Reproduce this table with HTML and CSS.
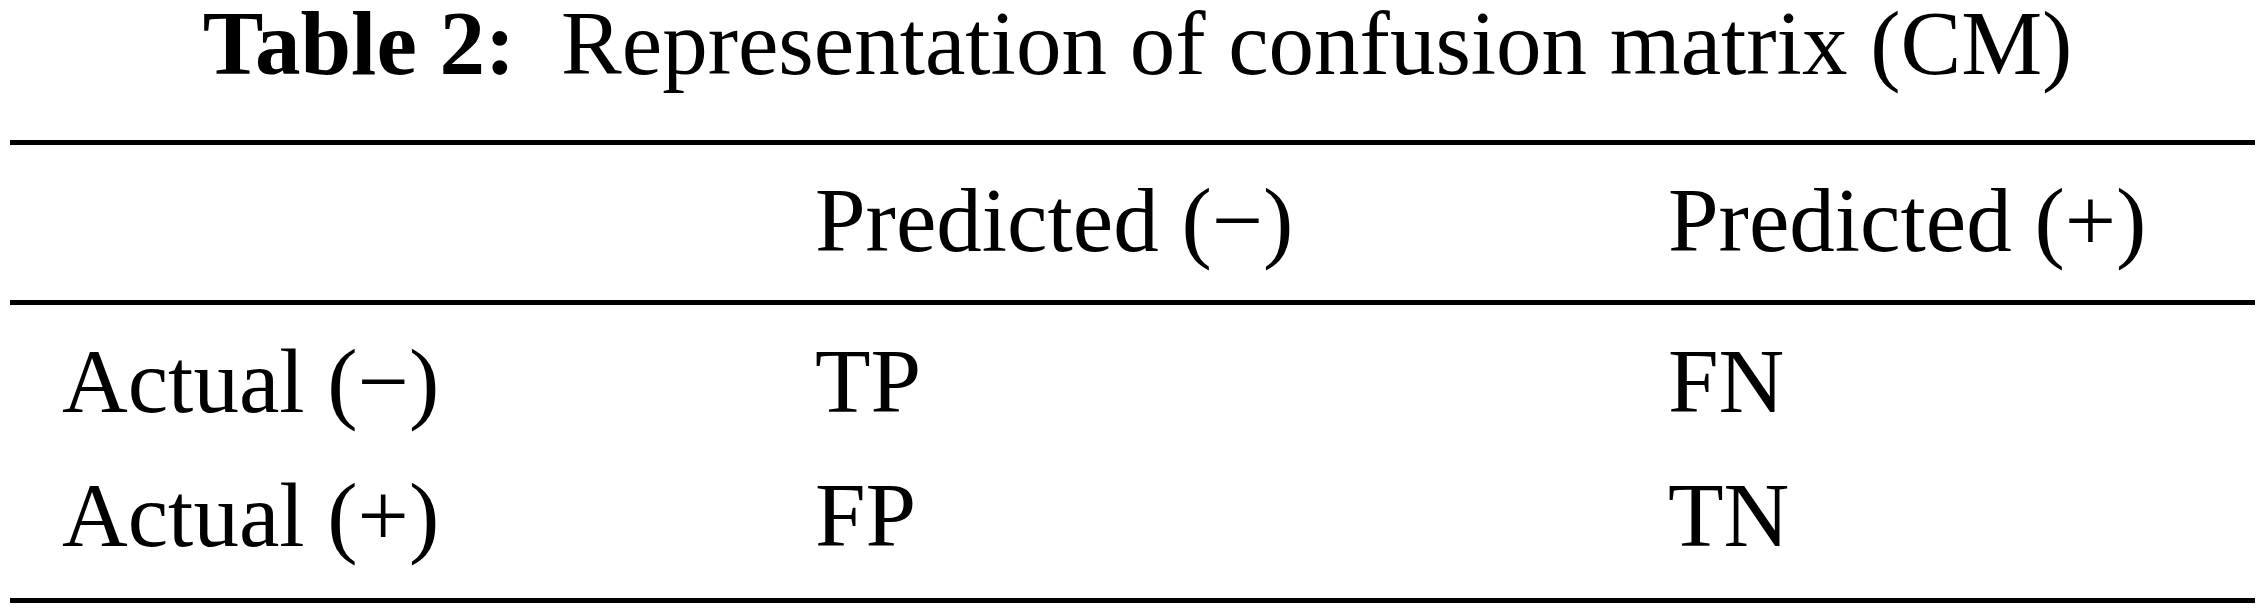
FILE: index.html
```html
<!DOCTYPE html>
<html lang="en">
<head>
<meta charset="utf-8">
<title>Table 2: Representation of confusion matrix (CM)</title>
<link rel="stylesheet" href="styles.css">
</head>
<body>
<div class="page">
  <div class="caption"><span class="label">Table 2:</span> Representation of confusion matrix (CM)</div>
  <div class="matrix">
    <div class="row head">
      <div class="cell"></div>
      <div class="cell">Predicted (−)</div>
      <div class="cell">Predicted (+)</div>
    </div>
    <div class="body">
      <div class="row">
        <div class="cell">Actual (−)</div>
        <div class="cell">TP</div>
        <div class="cell">FN</div>
      </div>
      <div class="row">
        <div class="cell">Actual (+)</div>
        <div class="cell">FP</div>
        <div class="cell">TN</div>
      </div>
    </div>
  </div>
</div>
</body>
</html>
```
FILE: styles.css
```css
html, body {
  margin: 0;
  padding: 0;
  background: #ffffff;
}

body {
  font-family: "Liberation Serif", "Times New Roman", serif;
  font-size: 91px;
  line-height: 88px;
  color: #000000;
}

.page {
  padding: 0 10px;
}

.caption {
  text-align: center;
  padding-left: 10px;
  margin-bottom: 52px;
  white-space: nowrap;
}

.label {
  font-weight: bold;
  margin-right: 23px;
}

.matrix {
  border-top: 5px solid #000000;
  border-bottom: 5px solid #000000;
}

.row {
  display: grid;
  grid-template-columns: 753px 853px 1fr;
  padding-left: 52px;
}

.head {
  padding-top: 32px;
  padding-bottom: 35px;
  border-bottom: 5px solid #000000;
}

.body {
  display: grid;
  row-gap: 46px;
  padding-top: 33px;
  padding-bottom: 38px;
}

.cell {
  white-space: nowrap;
}
```
